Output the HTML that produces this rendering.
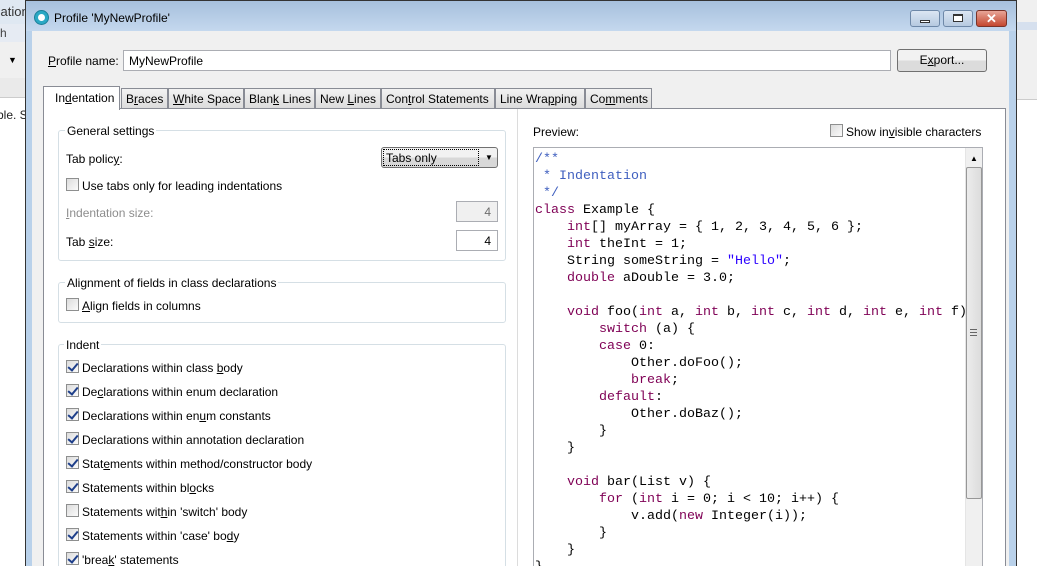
<!DOCTYPE html>
<html><head><meta charset="utf-8"><style>
*{margin:0;padding:0;box-sizing:border-box}
html{width:1037px;height:566px;overflow:hidden}
body{width:1037px;height:566px;overflow:hidden;position:relative;background:#fff;font-family:"Liberation Sans",sans-serif;font-size:12px;color:#000}
.a{position:absolute}
u{text-decoration:underline}
.cb{position:absolute;width:13px;height:13px;border:1px solid #8e8f8f;background:linear-gradient(135deg,#dcdcdc,#fbfbfb)}
.cb.on::after{content:"";position:absolute;left:3px;top:0px;width:4px;height:8px;border:solid #1e3f8a;border-width:0 2px 2px 0;transform:rotate(40deg)}
.lbl{position:absolute;white-space:nowrap}
.grp{position:absolute;border:1px solid #d5dfe5;border-radius:3px}
.gt{position:absolute;background:#fff;padding:0 2px;white-space:nowrap}
.tab{position:absolute;top:88px;height:20px;border:1px solid #898c95;border-bottom:none;background:linear-gradient(#f2f2f2,#dcdcdc);padding:3px 4px 0;white-space:nowrap}
pre{font-family:"Liberation Mono",monospace;font-size:13.33px;line-height:17px;color:#000}
.k{color:#7f0055}.c{color:#3f5fbf}.s{color:#2a00ff}
</style></head><body>
<div class="a" style="left:0;top:0;width:25px;height:24px;background:#dfe8f2"></div>
<div class="a" style="left:-6px;top:4px;font-size:13px;color:#333">cation</div>
<div class="a" style="left:0;top:24px;width:25px;height:18px;background:#e6ebf3"></div>
<div class="a" style="left:0;top:26px;color:#444">h</div>
<div class="a" style="left:0;top:42px;width:25px;height:36px;background:#f0f0f0"></div>
<div class="a" style="left:8px;top:55px;font-size:9px">▼</div>
<div class="a" style="left:0;top:78px;width:25px;height:20px;background:#eaeaea;border-bottom:1px solid #ccc"></div>
<div class="a" style="left:-3px;top:108px;color:#222">ble. S</div>
<div class="a" style="left:1017px;top:0;width:20px;height:566px;background:#fff"></div>
<div class="a" style="left:1017px;top:0;width:20px;height:100px;background:#f0f0f0;border-bottom:1px solid #ccc"></div>
<div class="a" style="left:1017px;top:22px;width:20px;height:8px;background:#d6e0ee"></div>
<div class="a" style="left:25px;top:0;width:992px;height:566px;background:#b9d1ea;border:1px solid #333;border-bottom:none"></div>
<div class="a" style="left:26px;top:1px;width:990px;height:30px;background:linear-gradient(#a6c0dd,#c4d8ee)"></div>
<div class="a" style="left:34px;top:10px;width:15px;height:15px;border-radius:50%;background:#2aa8c4;border:1px solid #1b7f99"></div>
<div class="a" style="left:38px;top:14px;width:7px;height:7px;border-radius:50%;background:#fff"></div>
<div class="a" style="left:54px;top:11px;font-size:12px">Profile 'MyNewProfile'</div>
<div class="a" style="left:910px;top:10px;width:30px;height:17px;border:1px solid #6e88a8;border-radius:3px;background:linear-gradient(#dbe6f3,#b6c9e0)"></div>
<div class="a" style="left:920px;top:20px;width:10px;height:3px;border:1px solid #333;background:#fff"></div>
<div class="a" style="left:943px;top:10px;width:30px;height:17px;border:1px solid #6e88a8;border-radius:3px;background:linear-gradient(#dbe6f3,#b6c9e0)"></div>
<div class="a" style="left:953px;top:14px;width:10px;height:8px;border:1px solid #333;border-top-width:2px;background:#fff"></div>
<div class="a" style="left:976px;top:10px;width:31px;height:17px;border:1px solid #7a3328;border-radius:3px;background:linear-gradient(#e8a597,#c4472f);color:#fff;font-weight:bold;text-align:center;font-size:13px;line-height:15px">✕</div>
<div class="a" style="left:32px;top:31px;width:977px;height:535px;background:#f0f0f0"></div>
<div class="lbl" style="left:48px;top:54px"><u>P</u>rofile name:</div>
<div class="a" style="left:123px;top:50px;width:768px;height:21px;background:#fff;border:1px solid #abadb3;padding:3px 5px">MyNewProfile</div>
<div class="a" style="left:897px;top:49px;width:90px;height:23px;border:1px solid #707070;border-radius:3px;background:linear-gradient(#f2f2f2 50%,#dcdcdc 50%);text-align:center;line-height:21px">E<u>x</u>port...</div>
<div class="tab" style="left:121px;width:47px">B<u>r</u>aces</div>
<div class="tab" style="left:168px;width:76px"><u>W</u>hite Space</div>
<div class="tab" style="left:244px;width:71px">Blan<u>k</u> Lines</div>
<div class="tab" style="left:315px;width:66px">New <u>L</u>ines</div>
<div class="tab" style="left:381px;width:114px">Con<u>t</u>rol Statements</div>
<div class="tab" style="left:495px;width:90px">Line Wra<u>p</u>ping</div>
<div class="tab" style="left:585px;width:67px">Co<u>m</u>ments</div>
<div class="a" style="left:43px;top:108px;width:963px;height:458px;background:#fff;border:1px solid #898c95;border-bottom:none"></div>
<div class="a" style="left:43px;top:86px;width:77px;height:24px;background:#fff;border:1px solid #898c95;border-bottom:none;padding:4px 0 0 11px">In<u>d</u>entation</div>
<div class="a" style="left:517px;top:109px;width:1px;height:457px;background:#dcdcdc"></div>
<div class="grp" style="left:58px;top:130px;width:448px;height:131px"></div>
<div class="gt" style="left:65px;top:124px">General settings</div>
<div class="lbl" style="left:66px;top:152px">Tab polic<u>y</u>:</div>
<div class="a" style="left:381px;top:147px;width:117px;height:21px;border:1px solid #707070;border-radius:3px;background:linear-gradient(#f2f2f2 50%,#d8d8d8 50%)"></div>
<div class="a" style="left:383px;top:149px;width:96px;height:17px;border:1px dotted #000;padding:1px 2px">Tabs only</div>
<div class="a" style="left:485px;top:153px;font-size:8px">▼</div>
<div class="cb" style="left:66px;top:178px"></div>
<div class="lbl" style="left:82px;top:179px">Use tabs only for leading indentations</div>
<div class="lbl" style="left:66px;top:206px;color:#8d8d8d"><u>I</u>ndentation size:</div>
<div class="a" style="left:456px;top:201px;width:42px;height:21px;background:#f0f0f0;border:1px solid #abadb3;text-align:right;padding:3px 6px;color:#6d6d6d">4</div>
<div class="lbl" style="left:66px;top:235px">Tab <u>s</u>ize:</div>
<div class="a" style="left:456px;top:230px;width:42px;height:21px;background:#fff;border:1px solid #abadb3;text-align:right;padding:3px 6px">4</div>
<div class="grp" style="left:58px;top:282px;width:448px;height:41px"></div>
<div class="gt" style="left:65px;top:276px">Alignment of fields in class declarations</div>
<div class="cb" style="left:66px;top:298px"></div>
<div class="lbl" style="left:82px;top:299px"><u>A</u>lign fields in columns</div>
<div class="grp" style="left:58px;top:344px;width:448px;height:240px"></div>
<div class="gt" style="left:64px;top:338px">Indent</div>
<div class="cb on" style="left:66px;top:360px"></div><div class="lbl" style="left:82px;top:361px">Declarations within class <u>b</u>ody</div>
<div class="cb on" style="left:66px;top:384px"></div><div class="lbl" style="left:82px;top:385px">De<u>c</u>larations within enum declaration</div>
<div class="cb on" style="left:66px;top:408px"></div><div class="lbl" style="left:82px;top:409px">Declarations within en<u>u</u>m constants</div>
<div class="cb on" style="left:66px;top:432px"></div><div class="lbl" style="left:82px;top:433px">Declarations within annotation declaration</div>
<div class="cb on" style="left:66px;top:456px"></div><div class="lbl" style="left:82px;top:457px">Stat<u>e</u>ments within method/constructor body</div>
<div class="cb on" style="left:66px;top:480px"></div><div class="lbl" style="left:82px;top:481px">Statements within bl<u>o</u>cks</div>
<div class="cb" style="left:66px;top:504px"></div><div class="lbl" style="left:82px;top:505px">Statements wit<u>h</u>in 'switch' body</div>
<div class="cb on" style="left:66px;top:528px"></div><div class="lbl" style="left:82px;top:529px">Statements within 'case' bo<u>d</u>y</div>
<div class="cb on" style="left:66px;top:552px"></div><div class="lbl" style="left:82px;top:553px">'brea<u>k</u>' statements</div>
<div class="lbl" style="left:533px;top:125px">Preview:</div>
<div class="cb" style="left:830px;top:124px"></div>
<div class="lbl" style="left:846px;top:125px">Show in<u>v</u>isible characters</div>
<div class="a" style="left:533px;top:147px;width:450px;height:420px;background:#fff;border:1px solid #abadb3;overflow:hidden">
<pre style="position:absolute;left:1px;top:3px">
<span class="c">/**
 * Indentation
 */</span>
<span class="k">class</span> Example {
    <span class="k">int</span>[] myArray = { 1, 2, 3, 4, 5, 6 };
    <span class="k">int</span> theInt = 1;
    String someString = <span class="s">"Hello"</span>;
    <span class="k">double</span> aDouble = 3.0;

    <span class="k">void</span> foo(<span class="k">int</span> a, <span class="k">int</span> b, <span class="k">int</span> c, <span class="k">int</span> d, <span class="k">int</span> e, <span class="k">int</span> f) {
        <span class="k">switch</span> (a) {
        <span class="k">case</span> 0:
            Other.doFoo();
            <span class="k">break</span>;
        <span class="k">default</span>:
            Other.doBaz();
        }
    }

    <span class="k">void</span> bar(List v) {
        <span class="k">for</span> (<span class="k">int</span> i = 0; i &lt; 10; i++) {
            v.add(<span class="k">new</span> Integer(i));
        }
    }
}</pre>
<div class="a" style="left:431px;top:0;width:18px;height:420px;background:#f0f0f0;border-left:1px solid #e5e5e5"></div>
<div class="a" style="left:436px;top:6px;font-size:8px">▲</div>
<div class="a" style="left:432px;top:19px;width:16px;height:332px;border:1px solid #979797;border-radius:2px;background:linear-gradient(90deg,#ececec,#dcdcdc)"></div>
<div class="a" style="left:436px;top:181px;width:7px;height:7px;border-top:1px solid #666;border-bottom:1px solid #666"></div>
<div class="a" style="left:436px;top:184px;width:7px;height:1px;background:#666"></div>
</div>
</body></html>
